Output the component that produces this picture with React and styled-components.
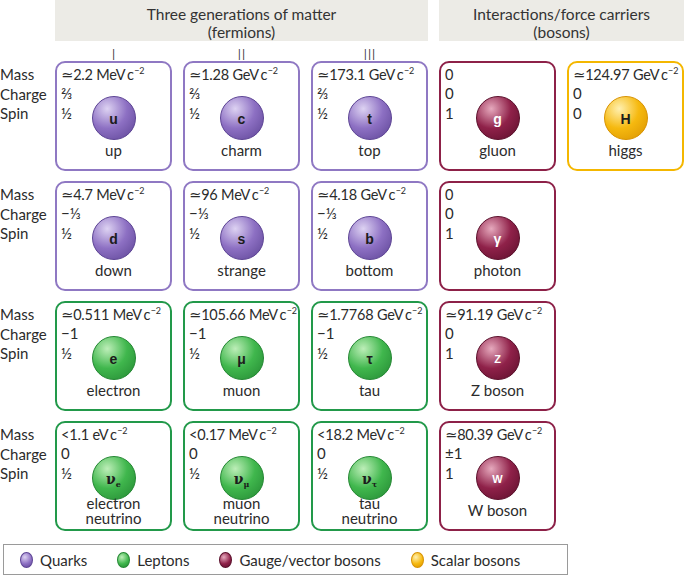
import React from 'react'
import styled, { createGlobalStyle } from 'styled-components'

const GlobalStyle = createGlobalStyle`
  body {
    margin: 0;
    background: #fff;
    font-family: "Lato", "DejaVu Sans", sans-serif;
    color: #2b2b2b;
  }
`;

const palette = {
  quark: { border: '#8f78c3', light: '#ddd2f2', base: '#8d70c3', dark: '#5c4394', text: '#1c1c1c' },
  lepton: { border: '#22994a', light: '#bdeeb8', base: '#40b74d', dark: '#238732', text: '#1c1c1c' },
  gauge: { border: '#8d2148', light: '#e6a9bd', base: '#8f2149', dark: '#5a0e2a', text: '#fff' },
  scalar: { border: '#f4b700', light: '#fff0b0', base: '#f6b90f', dark: '#d89200', text: '#1c1c1c' },
};

const Page = styled.div`
  width: 685px;
  height: 583px;
  overflow: hidden;
  display: flex;
  flex-direction: column;
`;

const Columns = styled.div`
  display: grid;
  grid-template-columns: 44px repeat(5, 117px);
  column-gap: 11px;
`;

const HeaderRow = styled(Columns)`
  height: 41px;
`;

const Band = styled.div`
  grid-column: ${p => p.$col} / span ${p => p.$span};
  background: #ecebe6;
  text-align: center;
  font-size: 15.5px;
  line-height: 18px;
  padding-top: 5px;
  color: #333;
`;

const NumeralRow = styled(Columns)`
  height: 20px;
`;

const Numeral = styled.div`
  grid-column: ${p => p.$col};
  text-align: center;
  font-size: 16px;
  line-height: 16px;
  padding-top: 5px;
  color: #333;
  font-weight: 300;
`;

const CardGrid = styled(Columns)`
  grid-auto-rows: 110px;
  row-gap: 10px;
`;

const Labels = styled.div`
  padding-top: 4px;
  font-size: 15px;
  line-height: 19.5px;
  color: #2b2b2b;
  white-space: nowrap;
`;

const Card = styled.div`
  box-sizing: border-box;
  border: 2px solid ${p => palette[p.$kind].border};
  border-radius: 10px;
  padding: 2px 4px 0;
  display: flex;
  flex-direction: column;
`;

const MassLine = styled.div`
  font-size: 14.5px;
  line-height: 19px;
  letter-spacing: -0.2px;
  white-space: nowrap;
`;

const Approx = styled.span`
  font-size: 14.5px;
  letter-spacing: 0;
`;

const Sup = styled.sup`
  font-size: 9px;
  line-height: 0;
  vertical-align: 6px;
  margin-left: 0.5px;
`;

const Body = styled.div`
  display: grid;
  grid-template-columns: 1fr 44px 1fr;
`;

const Props = styled.div`
  font-size: 15px;
  line-height: 19.5px;
  white-space: nowrap;
`;

const Frac = styled.span`
  font-size: 15px;
`;

const Ball = styled.div`
  width: 44px;
  height: 44px;
  margin-top: 12px;
  box-sizing: border-box;
  border-radius: 50%;
  border: 1px solid ${p => palette[p.$kind].dark};
  background: radial-gradient(circle at 34% 28%, ${p => palette[p.$kind].light} 0%, ${p => palette[p.$kind].base} 48%, ${p => palette[p.$kind].dark} 100%);
  display: flex;
  align-items: center;
  justify-content: center;
  padding-top: 2px;
  color: ${p => palette[p.$kind].text};
  font-family: "Liberation Sans", sans-serif;
  font-weight: bold;
  font-size: ${p => (p.$small ? '11px' : '14px')};
`;

const Nu = styled.span`
  font-family: "DejaVu Serif", serif;
  font-size: 14px;
  font-weight: bold;
`;

const Sub = styled.sub`
  font-size: 8px;
  line-height: 0;
  vertical-align: -3px;
`;

const Name = styled.div`
  height: 30px;
  margin-top: -4.5px;
  display: flex;
  align-items: center;
  justify-content: center;
  text-align: center;
  font-size: 15px;
  line-height: 15px;
  white-space: pre-line;
  color: #2b2b2b;
`;

const Legend = styled.div`
  box-sizing: border-box;
  margin: 13px 0 0 3px;
  width: 565px;
  height: 31px;
  border: 1px solid #9a9a9a;
  display: flex;
  align-items: center;
  padding-left: 16px;
  gap: 30px;
`;

const LegendItem = styled.div`
  display: flex;
  align-items: center;
  gap: 7px;
  font-size: 15px;
  color: #2b2b2b;
`;

const Dot = styled.span`
  width: 13px;
  height: 16px;
  box-sizing: border-box;
  border-radius: 50%;
  border: 1px solid ${p => palette[p.$kind].dark};
  background: radial-gradient(circle at 35% 30%, ${p => palette[p.$kind].light} 0%, ${p => palette[p.$kind].base} 55%, ${p => palette[p.$kind].dark} 100%);
`;

const frac = v => (/[⅔⅓½]/.test(v) ? (
  <>
    {v.startsWith('−') ? '−' : ''}
    <Frac>{v.replace('−', '')}</Frac>
  </>
) : v);

const rows = [
  [
    { kind: 'quark', sym: 'u', mass: '≃2.2', unit: 'MeV', charge: '⅔', spin: '½', name: 'up' },
    { kind: 'quark', sym: 'c', mass: '≃1.28', unit: 'GeV', charge: '⅔', spin: '½', name: 'charm' },
    { kind: 'quark', sym: 't', mass: '≃173.1', unit: 'GeV', charge: '⅔', spin: '½', name: 'top' },
    { kind: 'gauge', sym: 'g', mass: '0', charge: '0', spin: '1', name: 'gluon' },
    { kind: 'scalar', sym: 'H', mass: '≃124.97', unit: 'GeV', charge: '0', spin: '0', name: 'higgs' },
  ],
  [
    { kind: 'quark', sym: 'd', mass: '≃4.7', unit: 'MeV', charge: '−⅓', spin: '½', name: 'down' },
    { kind: 'quark', sym: 's', mass: '≃96', unit: 'MeV', charge: '−⅓', spin: '½', name: 'strange' },
    { kind: 'quark', sym: 'b', mass: '≃4.18', unit: 'GeV', charge: '−⅓', spin: '½', name: 'bottom' },
    { kind: 'gauge', sym: 'γ', mass: '0', charge: '0', spin: '1', name: 'photon' },
  ],
  [
    { kind: 'lepton', sym: 'e', mass: '≃0.511', unit: 'MeV', charge: '−1', spin: '½', name: 'electron' },
    { kind: 'lepton', sym: 'μ', mass: '≃105.66', unit: 'MeV', charge: '−1', spin: '½', name: 'muon' },
    { kind: 'lepton', sym: 'τ', mass: '≃1.7768', unit: 'GeV', charge: '−1', spin: '½', name: 'tau' },
    { kind: 'gauge', sym: 'Z', small: true, mass: '≃91.19', unit: 'GeV', charge: '0', spin: '1', name: 'Z boson' },
  ],
  [
    { kind: 'lepton', nu: 'e', mass: '<1.1', unit: 'eV', charge: '0', spin: '½', name: 'electron\nneutrino' },
    { kind: 'lepton', nu: 'μ', mass: '<0.17', unit: 'MeV', charge: '0', spin: '½', name: 'muon\nneutrino' },
    { kind: 'lepton', nu: 'τ', mass: '<18.2', unit: 'MeV', charge: '0', spin: '½', name: 'tau\nneutrino' },
    { kind: 'gauge', sym: 'W', small: true, mass: '≃80.39', unit: 'GeV', charge: '±1', spin: '1', name: 'W boson' },
  ],
];

function Mass({ value }) {
  if (value.startsWith('≃')) return <><Approx>≃</Approx>{value.slice(1)}</>;
  return value;
}

function Particle({ p }) {
  return (
    <Card $kind={p.kind}>
      <MassLine>
        <Mass value={p.mass} />
        {p.unit && <> {p.unit}{'\u2009'}c<Sup>−2</Sup></>}
      </MassLine>
      <Body>
        <Props>
          <div>{frac(p.charge)}</div>
          <div>{frac(p.spin)}</div>
        </Props>
        <Ball $kind={p.kind} $small={p.small}>
          {p.nu ? <Nu>ν<Sub>{p.nu}</Sub></Nu> : p.sym}
        </Ball>
      </Body>
      <Name>{p.name}</Name>
    </Card>
  );
}

export default function App() {
  return (
    <Page>
      <GlobalStyle />
      <HeaderRow>
        <Band $col={2} $span={3}>Three generations of matter<br />(fermions)</Band>
        <Band $col={5} $span={2}>Interactions/force carriers<br />(bosons)</Band>
      </HeaderRow>
      <NumeralRow>
        <Numeral $col={2}>I</Numeral>
        <Numeral $col={3}>II</Numeral>
        <Numeral $col={4}>III</Numeral>
      </NumeralRow>
      <CardGrid>
        {rows.map((row, i) => (
          <React.Fragment key={i}>
            <Labels>Mass<br />Charge<br />Spin</Labels>
            {row.map(p => <Particle key={p.name} p={p} />)}
            {row.length < 5 && <span />}
          </React.Fragment>
        ))}
      </CardGrid>
      <Legend>
        <LegendItem><Dot $kind="quark" />Quarks</LegendItem>
        <LegendItem><Dot $kind="lepton" />Leptons</LegendItem>
        <LegendItem><Dot $kind="gauge" />Gauge/vector bosons</LegendItem>
        <LegendItem><Dot $kind="scalar" />Scalar bosons</LegendItem>
      </Legend>
    </Page>
  );
}
